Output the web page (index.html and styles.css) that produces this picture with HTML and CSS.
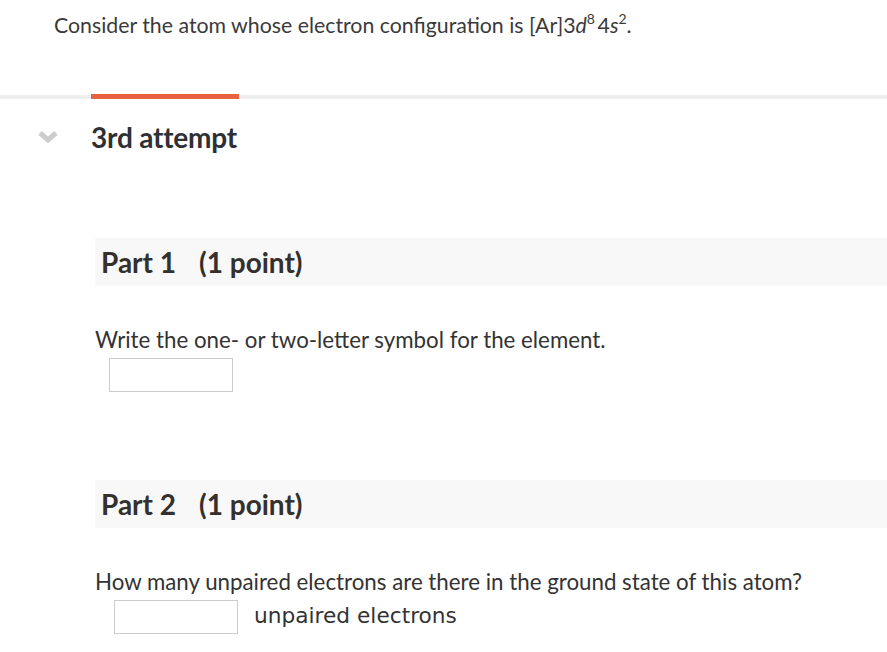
FILE: index.html
```html
<!DOCTYPE html>
<html>
<head>
<meta charset="utf-8">
<link rel="stylesheet" href="styles.css">
</head>
<body>
<p class="question">Consider the atom whose electron configuration is [Ar]3<i>d</i><sup>8</sup>&#8201;4<i>s</i><sup>2</sup>.</p>
<div class="tabs"><div class="tab"></div></div>
<div class="attempt">
  <svg class="chevron" width="20" height="14" viewBox="0 0 20 14"><path d="M2 3 L10 10 L18 3" fill="none" stroke="#cccccc" stroke-width="5" stroke-linejoin="miter"/></svg>
  <h2 class="attempt-title">3rd attempt</h2>
</div>
<section class="part part-one">
  <div class="part-head"><span class="part-name">Part 1</span><span class="part-points">(1 point)</span></div>
  <p class="prompt">Write the one- or two-letter symbol for the element.</p>
  <div class="answer answer-one"><span class="field"></span></div>
</section>
<section class="part part-two">
  <div class="part-head"><span class="part-name">Part 2</span><span class="part-points">(1 point)</span></div>
  <p class="prompt">How many unpaired electrons are there in the ground state of this atom?</p>
  <div class="answer answer-two"><span class="field"></span><span class="unit">unpaired electrons</span></div>
</section>
</body>
</html>
```
FILE: styles.css
```css
html, body {
  margin: 0;
  padding: 0;
  background: #ffffff;
}
body {
  font-family: Lato, "Liberation Sans", sans-serif;
  color: #333333;
  width: 887px;
  height: 652px;
  overflow: hidden;
}
.question {
  margin: 0;
  padding: 11px 0 0 54px;
  font-size: 21.3px;
  line-height: 28px;
  height: 82px;
  box-sizing: border-box;
  color: #3a3a3a;
}
.question sup {
  font-size: 14px;
  line-height: 0;
  vertical-align: 9px;
}
.question i {
  font-style: italic;
}
.tabs {
  height: 5px;
  margin-top: 12px;
  background: linear-gradient(to bottom, transparent 1px, #eeeeee 1px);
  display: flex;
}
.tab {
  margin-left: 91px;
  width: 148px;
  height: 5px;
  background: #e8623f;
}
.attempt {
  display: flex;
  align-items: center;
  height: 75px;
  margin-top: 0;
}
.chevron {
  margin-left: 38px;
  margin-right: 33px;
}
.attempt-title {
  margin: 0;
  font-size: 28px;
  font-weight: 700;
  color: #2f2f36;
  letter-spacing: -0.2px;
}
.part {
  margin-left: 95px;
}
.part-one {
  margin-top: 64px;
}
.part-two {
  margin-top: 88px;
}
.part-head {
  height: 48px;
  background: #f8f8f8;
  display: flex;
  align-items: center;
  padding-left: 6px;
  font-size: 28px;
  font-weight: 700;
  color: #33302e;
}
.part-name {
  margin-right: 23px;
}
.prompt {
  margin: 40px 0 0 0;
  font-size: 22.3px;
  line-height: 28px;
  color: #333333;
}
.answer {
  display: flex;
  align-items: center;
  margin-top: 4px;
}
.answer-one {
  padding-left: 14px;
}
.answer-two {
  padding-left: 19px;
}
.field {
  display: block;
  width: 122px;
  height: 32px;
  border: 1px solid #cccccc;
  background: #ffffff;
}
.unit {
  margin-left: 16px;
  margin-bottom: 4px;
  font-family: "DejaVu Sans", sans-serif;
  font-size: 21.7px;
  color: #333333;
}
```
